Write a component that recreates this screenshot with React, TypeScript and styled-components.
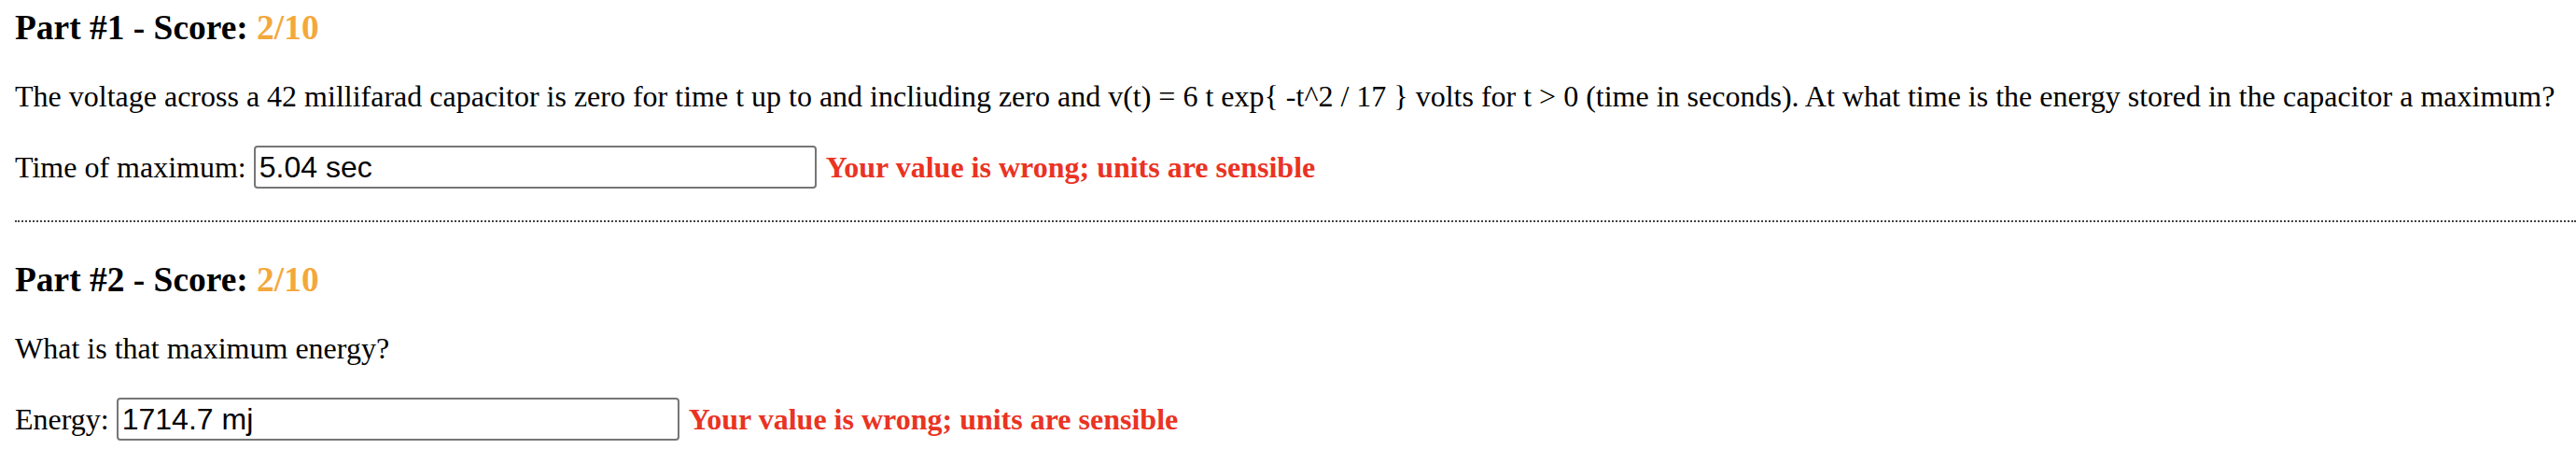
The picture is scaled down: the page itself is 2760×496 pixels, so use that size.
import React from "react";
import styled, { createGlobalStyle } from "styled-components";

const GlobalStyle = createGlobalStyle`
  html, body {
    margin: 0;
    padding: 0;
    background: #ffffff;
  }
  body {
    font-family: "Liberation Serif", "Times New Roman", serif;
    color: #000000;
    overflow: hidden;
  }
`;

const Page = styled.main`
  display: flex;
  flex-direction: column;
  padding: 0 0 0 16px;
`;

const Section = styled.section`
  display: flex;
  flex-direction: column;
  gap: 34px;
  padding: 8px 0 32px;
`;

const Heading = styled.h3`
  margin: 0;
  font-size: 37.44px;
  line-height: 43px;
  font-weight: 700;
  white-space: nowrap;
`;

const Score = styled.span`
  color: #f3a83b;
`;

const Question = styled.p`
  margin: 0;
  font-size: 32px;
  line-height: 37px;
  white-space: nowrap;
`;

const AnswerRow = styled.div`
  display: flex;
  align-items: center;
  gap: 8px;
  font-size: 32px;
  line-height: 37px;
`;

const Label = styled.label`
  white-space: nowrap;
`;

const AnswerInput = styled.input`
  box-sizing: border-box;
  width: 603px;
  height: 46px;
  margin: 0;
  padding: 0 4px;
  border: 2px solid #767676;
  border-radius: 4px;
  background: #ffffff;
  font-family: "Liberation Sans", Arial, sans-serif;
  font-size: 32px;
  color: #000000;
  outline: none;
`;

const Feedback = styled.b`
  margin-left: 2px;
  color: #ea3323;
  font-weight: 700;
  white-space: nowrap;
`;

const Divider = styled.div`
  height: 0;
  margin-right: 0;
  border-top: 2px dotted #444444;
`;

type Part = {
  num: number;
  score: string;
  question: string;
  label: string;
  value: string;
};

const parts: Part[] = [
  {
    num: 1,
    score: "2/10",
    question:
      "The voltage across a 42 millifarad capacitor is zero for time t up to and incliuding zero and v(t) = 6 t exp{ -t^2 / 17 } volts for t > 0 (time in seconds). At what time is the energy stored in the capacitor a maximum?",
    label: "Time of maximum:",
    value: "5.04 sec",
  },
  {
    num: 2,
    score: "2/10",
    question: "What is that maximum energy?",
    label: "Energy:",
    value: "1714.7 mj",
  },
];

export default function App() {
  return (
    <>
      <GlobalStyle />
      <Page>
        {parts.map((p) => (
          <Section key={p.num}>
            <Heading>
              Part #{p.num} - Score: <Score>{p.score}</Score>
            </Heading>
            <Question>{p.question}</Question>
            <AnswerRow>
              <Label htmlFor={`ans-${p.num}`}>{p.label}</Label>
              <AnswerInput id={`ans-${p.num}`} type="text" defaultValue={p.value} readOnly />
              <Feedback>Your value is wrong; units are sensible</Feedback>
            </AnswerRow>
            <Divider />
          </Section>
        ))}
      </Page>
    </>
  );
}
